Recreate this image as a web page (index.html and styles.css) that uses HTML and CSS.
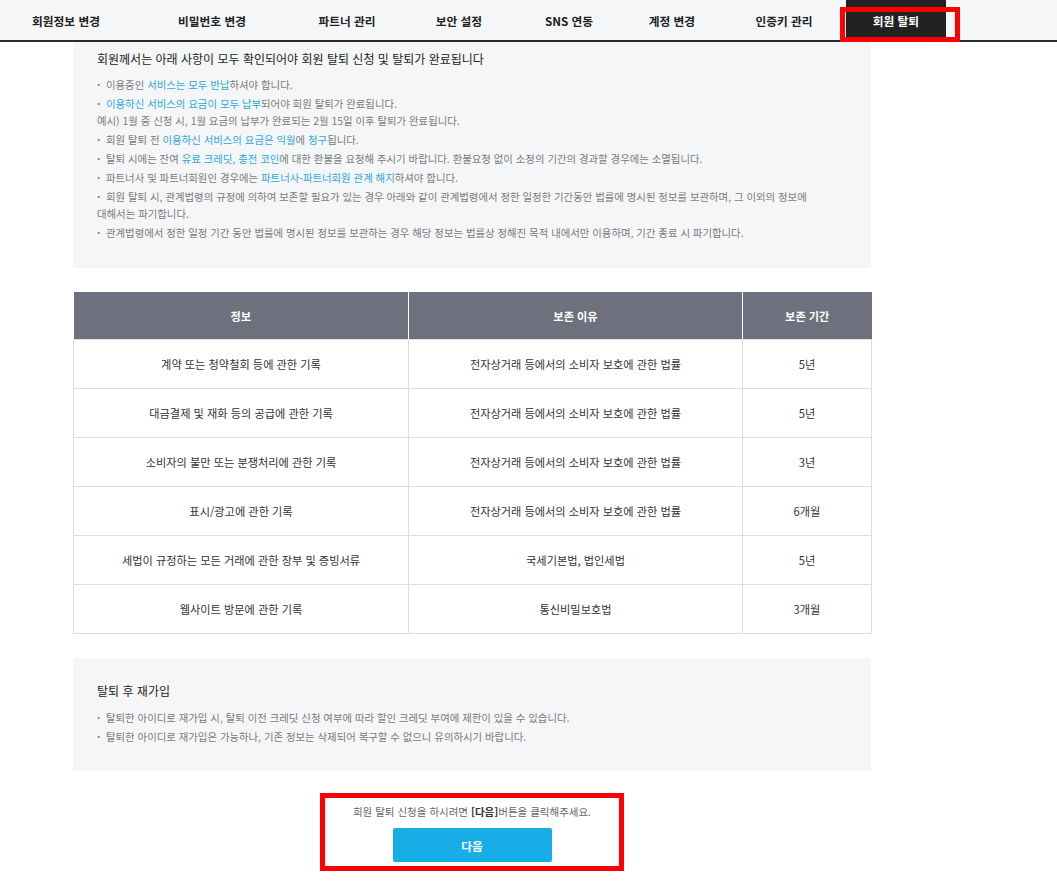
FILE: index.html
```html
<!DOCTYPE html>
<html lang="ko">
<head>
  <meta charset="UTF-8">
  <meta name="viewport" content="width=device-width, initial-scale=1.0">
  <title>회원 탈퇴</title>
  <link rel="stylesheet" href="styles.css">
</head>
<body>
  <nav class="tabs">
    <a href="#" class="tab">회원정보 변경</a>
    <a href="#" class="tab">비밀번호 변경</a>
    <a href="#" class="tab">파트너 관리</a>
    <a href="#" class="tab">보안 설정</a>
    <a href="#" class="tab">SNS 연동</a>
    <a href="#" class="tab">계정 변경</a>
    <a href="#" class="tab">인증키 관리</a>
    <a href="#" class="tab active">회원 탈퇴</a>
  </nav>

  <div class="content">
    <div class="notice-box first">
      <h3>회원께서는 아래 사항이 모두 확인되어야 회원 탈퇴 신청 및 탈퇴가 완료됩니다</h3>
      <ul class="notice-list">
        <li>이용중인 <span class="hl">서비스는 모두 반납</span>하셔야 합니다.</li>
        <li><span class="hl">이용하신 서비스의 요금이 모두 납부</span>되어야 회원 탈퇴가 완료됩니다.<br>예시) 1월 중 신청 시, 1월 요금의 납부가 완료되는 2월 15일 이후 탈퇴가 완료됩니다.</li>
        <li>회원 탈퇴 전 <span class="hl">이용하신 서비스의 요금은 익월</span>에 <span class="hl">청구</span>됩니다.</li>
        <li>탈퇴 시에는 잔여 <span class="hl">유료 크레딧, 충전 코인</span>에 대한 환불을 요청해 주시기 바랍니다. 환불요청 없이 소정의 기간의 경과할 경우에는 소멸됩니다.</li>
        <li>파트너사 및 파트너회원인 경우에는 <span class="hl">파트너사-파트너회원 관계 해지</span>하셔야 합니다.</li>
        <li>회원 탈퇴 시, 관계법령의 규정에 의하여 보존할 필요가 있는 경우 아래와 같이 관계법령에서 정한 일정한 기간동안 법률에 명시된 정보를 보관하며, 그 이외의 정보에 대해서는 파기합니다.</li>
        <li>관계법령에서 정한 일정 기간 동안 법률에 명시된 정보를 보관하는 경우 해당 정보는 법률상 정해진 목적 내에서만 이용하며, 기간 종료 시 파기합니다.</li>
      </ul>
    </div>

    <table class="keep-table">
      <colgroup>
        <col class="col-info">
        <col class="col-reason">
        <col class="col-period">
      </colgroup>
      <thead>
        <tr>
          <th>정보</th>
          <th>보존 이유</th>
          <th>보존 기간</th>
        </tr>
      </thead>
      <tbody>
        <tr>
          <td>계약 또는 청약철회 등에 관한 기록</td>
          <td>전자상거래 등에서의 소비자 보호에 관한 법률</td>
          <td>5년</td>
        </tr>
        <tr>
          <td>대금결제 및 재화 등의 공급에 관한 기록</td>
          <td>전자상거래 등에서의 소비자 보호에 관한 법률</td>
          <td>5년</td>
        </tr>
        <tr>
          <td>소비자의 불만 또는 분쟁처리에 관한 기록</td>
          <td>전자상거래 등에서의 소비자 보호에 관한 법률</td>
          <td>3년</td>
        </tr>
        <tr>
          <td>표시/광고에 관한 기록</td>
          <td>전자상거래 등에서의 소비자 보호에 관한 법률</td>
          <td>6개월</td>
        </tr>
        <tr>
          <td>세법이 규정하는 모든 거래에 관한 장부 및 증빙서류</td>
          <td>국세기본법, 법인세법</td>
          <td>5년</td>
        </tr>
        <tr>
          <td>웹사이트 방문에 관한 기록</td>
          <td>통신비밀보호법</td>
          <td>3개월</td>
        </tr>
      </tbody>
    </table>

    <div class="notice-box second">
      <h3>탈퇴 후 재가입</h3>
      <ul class="notice-list">
        <li>탈퇴한 아이디로 재가입 시, 탈퇴 이전 크레딧 신청 여부에 따라 할인 크레딧 부여에 제한이 있을 수 있습니다.</li>
        <li>탈퇴한 아이디로 재가입은 가능하나, 기존 정보는 삭제되어 복구할 수 없으니 유의하시기 바랍니다.</li>
      </ul>
    </div>

    <div class="confirm-area">
      <p>회원 탈퇴 신청을 하시려면 <strong>[다음]</strong>버튼을 클릭해주세요.</p>
      <button type="button" class="btn-next">다음</button>
    </div>
  </div>
</body>
</html>
```

FILE: styles.css
```css
/* General Styling */
body {
  margin: 0;
  font-family: "Noto Sans CJK KR", "Noto Sans", sans-serif;
  background: #fff;
  color: #333;
  word-break: keep-all;
}

/* Tabs */
.tabs {
  display: grid;
  grid-template-columns: 132px 160px 110px 114px 106px 100px 124px 100px;
  height: 40px;
  background: #f5f6f8;
  border-bottom: 2px solid #2a2a2a;
}

.tab {
  position: relative;
  display: flex;
  align-items: center;
  justify-content: center;
  font-size: 11.7px;
  font-weight: 700;
  color: #222;
  text-decoration: none;
}

.tab.active {
  background: #222;
  color: #fff;
}

.tab.active::after {
  content: "";
  position: absolute;
  left: -6px;
  top: 7px;
  width: 120px;
  height: 35px;
  border: 5px solid #f00;
  box-sizing: border-box;
}

/* Content */
.content {
  width: 798px;
  margin-left: 73px;
  padding-bottom: 20px;
}

.notice-box {
  background: #f5f6f8;
  padding: 8px 24px 27px;
}

.notice-box.second {
  margin-top: 24px;
  padding: 24px 24px 26px;
}

.notice-box h3 {
  margin: 0;
  font-size: 12px;
  font-weight: 400;
  line-height: 18px;
  color: #222;
}

.notice-list {
  list-style: none;
  margin: 8px 0 0;
  padding: 0;
}

.notice-box.second .notice-list {
  margin-top: 9px;
}

.notice-list li {
  font-size: 10.4px;
  line-height: 17px;
  color: #7a7a7a;
  margin-bottom: 2px;
}

.notice-list li:last-child {
  margin-bottom: 0;
}

.notice-list li::before {
  content: "·";
  display: inline-block;
  width: 9px;
  font-weight: 700;
}

.hl {
  color: #2ea7e0;
}

/* Table */
.keep-table {
  width: 798px;
  margin-top: 24px;
  border-collapse: collapse;
  table-layout: fixed;
  font-size: 11.2px;
}

.col-info {
  width: 335px;
}

.col-reason {
  width: 334px;
}

.col-period {
  width: 129px;
}

.keep-table th {
  height: 47px;
  background: #6e717d;
  color: #fff;
  font-weight: 700;
  border-left: 1px solid #fff;
  padding: 0;
}

.keep-table th:first-child {
  border-left: none;
}

.keep-table td {
  height: 48px;
  padding: 0;
  text-align: center;
  color: #333;
  border: 1px solid #ddd;
}

/* Confirm */
.confirm-area {
  width: 304px;
  box-sizing: border-box;
  margin: 22px auto 0;
  padding: 5px 0 4px;
  border: 5px solid #f00;
  text-align: center;
}

.confirm-area p {
  margin: 0 0 8px;
  font-size: 10.5px;
  line-height: 17px;
  color: #666;
}

.confirm-area strong {
  color: #333;
}

.btn-next {
  width: 159px;
  height: 34px;
  border: none;
  border-radius: 2px;
  background: #17aee8;
  color: #fff;
  font-family: inherit;
  font-size: 11.7px;
  font-weight: 700;
  cursor: pointer;
}
```
